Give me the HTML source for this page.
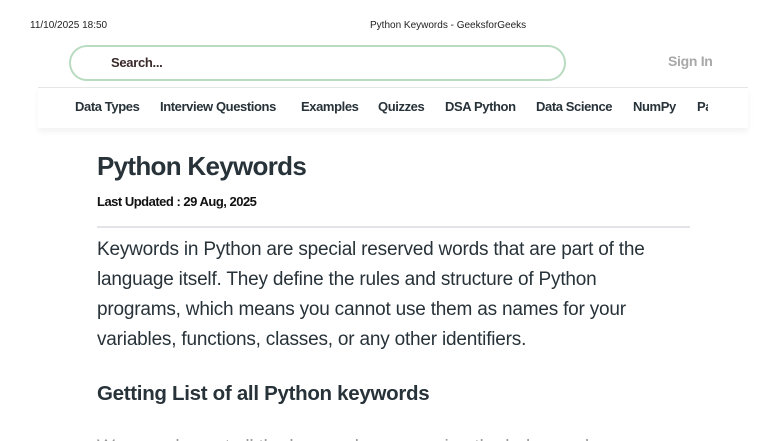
<!DOCTYPE html>
<html><head><meta charset="utf-8"><style>
html,body{margin:0;width:784px;height:441px;overflow:hidden}
body{background:#fff;font-family:"Liberation Sans",sans-serif;position:relative;color:#273239}
.a{position:absolute;white-space:nowrap}
.nav span{position:absolute;top:0;font-weight:bold;font-size:13px;letter-spacing:-0.4px;color:#273239}
.p{font-size:19px;letter-spacing:-0.2px;color:#273239}
</style></head><body>
<div class="a" style="left:30px;top:20px;font-size:10px;color:#222">11/10/2025 18:50</div>
<div class="a" style="left:370px;top:20px;font-size:10px;color:#222">Python Keywords - GeeksforGeeks</div>
<div class="a" style="left:69px;top:45px;width:493px;height:32px;border:2px solid #b9dcc1;border-radius:18px"></div>
<div class="a" style="left:111px;top:55px;font-size:13px;font-weight:bold;color:#3a2a2a;letter-spacing:-0.3px">Search...</div>
<div class="a" style="left:668px;top:53px;font-size:14px;font-weight:bold;color:#a8a8a8;letter-spacing:-0.3px">Sign In</div>
<div class="a" style="left:38px;top:87px;width:710px;height:1px;background:#e6e6e6"></div>
<div class="a" style="left:38px;top:88px;width:710px;height:40px;background:#fff;box-shadow:0 4px 6px rgba(0,0,0,0.05)"></div>
<div class="a nav" style="left:0;top:99px;width:710px;height:16px;overflow:visible">
<span style="left:75px">Data Types</span>
<span style="left:160px">Interview Questions</span>
<span style="left:301px">Examples</span>
<span style="left:378px">Quizzes</span>
<span style="left:445px">DSA Python</span>
<span style="left:536px">Data Science</span>
<span style="left:633px">NumPy</span>
<span style="left:697px;width:11px;overflow:hidden">Pa</span>
</div>
<div class="a" style="left:97px;top:151px;font-size:26px;font-weight:bold;letter-spacing:-0.7px">Python Keywords</div>
<div class="a" style="left:97px;top:194px;font-size:13px;font-weight:bold;letter-spacing:-0.5px;color:#111">Last Updated : 29 Aug, 2025</div>
<div class="a" style="left:97px;top:226px;width:593px;height:2px;background:#e4e4e8"></div>
<div class="a p" style="left:97px;top:239px">Keywords in Python are special reserved words that are part of the</div>
<div class="a p" style="left:97px;top:269px">language itself. They define the rules and structure of Python</div>
<div class="a p" style="left:97px;top:299px">programs, which means you cannot use them as names for your</div>
<div class="a p" style="left:97px;top:329px">variables, functions, classes, or any other identifiers.</div>
<div class="a" style="left:97px;top:382px;font-size:20.5px;font-weight:bold;letter-spacing:-0.3px">Getting List of all Python keywords</div>
<div class="a p" style="left:97px;top:437px;color:#999">We can also get all the keyword names using the below code.</div>
</body></html>
